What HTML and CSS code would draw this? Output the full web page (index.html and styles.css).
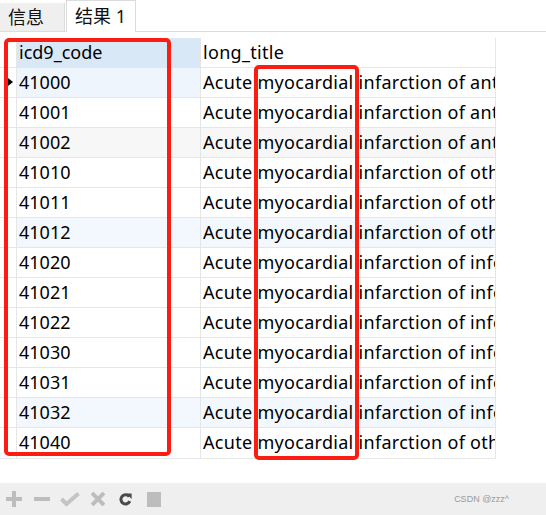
FILE: index.html
```html
<!DOCTYPE html>
<html lang="zh">

<head>
    <meta charset="UTF-8">
    <title>结果 1</title>
    <link rel="stylesheet" href="styles.css">
</head>

<body>
    <div class="tabs">
        <div class="tab">信息</div>
        <div class="tab active">结果 1</div>
    </div>

    <div class="grid-area">
        <div class="grid">
            <div class="row head">
                <div class="ind"></div>
                <div class="cell c1 sorted">icd9_code</div>
                <div class="cell c2">long_title</div>
            </div>
            <div class="row current">
                <div class="ind"><span class="arrow"></span></div>
                <div class="cell c1">41000</div>
                <div class="cell c2">Acute myocardial infarction of ant</div>
            </div>
            <div class="row">
                <div class="ind"></div>
                <div class="cell c1">41001</div>
                <div class="cell c2">Acute myocardial infarction of ant</div>
            </div>
            <div class="row grey">
                <div class="ind"></div>
                <div class="cell c1">41002</div>
                <div class="cell c2">Acute myocardial infarction of ant</div>
            </div>
            <div class="row">
                <div class="ind"></div>
                <div class="cell c1">41010</div>
                <div class="cell c2">Acute myocardial infarction of oth</div>
            </div>
            <div class="row">
                <div class="ind"></div>
                <div class="cell c1">41011</div>
                <div class="cell c2">Acute myocardial infarction of oth</div>
            </div>
            <div class="row blue">
                <div class="ind"></div>
                <div class="cell c1">41012</div>
                <div class="cell c2">Acute myocardial infarction of oth</div>
            </div>
            <div class="row">
                <div class="ind"></div>
                <div class="cell c1">41020</div>
                <div class="cell c2">Acute myocardial infarction of infe</div>
            </div>
            <div class="row">
                <div class="ind"></div>
                <div class="cell c1">41021</div>
                <div class="cell c2">Acute myocardial infarction of infe</div>
            </div>
            <div class="row">
                <div class="ind"></div>
                <div class="cell c1">41022</div>
                <div class="cell c2">Acute myocardial infarction of infe</div>
            </div>
            <div class="row">
                <div class="ind"></div>
                <div class="cell c1">41030</div>
                <div class="cell c2">Acute myocardial infarction of infe</div>
            </div>
            <div class="row">
                <div class="ind"></div>
                <div class="cell c1">41031</div>
                <div class="cell c2">Acute myocardial infarction of infe</div>
            </div>
            <div class="row blue">
                <div class="ind"></div>
                <div class="cell c1">41032</div>
                <div class="cell c2">Acute myocardial infarction of infe</div>
            </div>
            <div class="row">
                <div class="ind"></div>
                <div class="cell c1">41040</div>
                <div class="cell c2">Acute myocardial infarction of oth</div>
            </div>
        </div>

        <!-- annotation boxes drawn over the grid -->
        <div class="mark mark-code"></div>
        <div class="mark mark-word"></div>
    </div>

    <div class="toolbar">
        <svg class="tool t-add" width="16" height="16" viewBox="0 0 16 16"><path d="M8 0v16M0 8h16" stroke="#bdbdbd" stroke-width="4"/></svg>
        <svg class="tool t-del" width="16" height="16" viewBox="0 0 16 16"><path d="M0 8h16" stroke="#bdbdbd" stroke-width="4"/></svg>
        <svg class="tool t-ok" width="20" height="16" viewBox="0 0 20 16"><path d="M1.5 8l5 5L18.5 2.5" fill="none" stroke="#c4c4c4" stroke-width="4"/></svg>
        <svg class="tool t-no" width="14" height="14" viewBox="0 0 14 14"><path d="M1 1l12 12M13 1L1 13" stroke="#bdbdbd" stroke-width="4"/></svg>
        <svg class="tool t-ref" width="13" height="14" viewBox="0 0 13 14"><path d="M10.2 4.6A4.6 4.6 0 1 0 10.8 9.2" fill="none" stroke="#4a4a4a" stroke-width="3"/><path d="M7.2 1.6h5.4v5.4z" fill="#4a4a4a"/></svg>
        <svg class="tool t-stop" width="14" height="15" viewBox="0 0 14 15"><rect width="14" height="15" fill="#bdbdbd"/></svg>
        <span class="watermark">CSDN @zzz^</span>
    </div>
</body>

</html>
```

FILE: styles.css
```css
body {
    font-family: "Noto Sans", "Noto Sans CJK SC", sans-serif;
    margin: 0;
    padding: 0;
    width: 546px;
    height: 515px;
    display: flex;
    flex-direction: column;
    background-color: #fff;
    color: #000;
    overflow: hidden;
}

.tabs {
    display: flex;
    align-items: flex-end;
    height: 31px;
    border-bottom: 1px solid #dcdcdc;
}

.tab {
    width: 65px;
    height: 28px;
    line-height: 28px;
    padding-left: 8px;
    box-sizing: border-box;
    font-size: 18px;
    color: #111;
    background-color: #efefef;
    border-right: 1px solid #dcdcdc;
}

.tab.active {
    width: 70px;
    height: 32px;
    line-height: 31px;
    margin-left: 1px;
    margin-bottom: -1px;
    padding-left: 8px;
    background-color: #fff;
    border: 1px solid #dcdcdc;
    border-bottom: none;
}

.grid-area {
    flex: 1;
    position: relative;
    padding-top: 6px;
}

.grid {
    width: 496px;
    border-bottom: 1px solid #e6e6e6;
}

.row {
    display: flex;
    height: 30px;
}

.ind,
.cell {
    height: 30px;
    box-sizing: border-box;
    border-right: 1px solid #e6e6e6;
    border-bottom: 1px solid #e6e6e6;
}

.row:last-child .ind,
.row:last-child .cell {
    border-bottom: none;
}

.ind {
    width: 17px;
    position: relative;
    background-color: #fff;
}

.cell {
    font-size: 18px;
    line-height: 29px;
    padding-left: 2px;
    white-space: nowrap;
    overflow: hidden;
}

.c1 {
    width: 184px;
}

.c2 {
    width: 295px;
    letter-spacing: 0.3px;
}

.head .cell.sorted {
    background-color: #d9e8f7;
}

.current .c1 {
    background-color: #eef5fc;
}

.grey .cell {
    background-color: #f7f7f7;
}

.blue .cell {
    background-color: #f2f8fd;
}

.arrow {
    position: absolute;
    left: 8px;
    top: 10px;
    border-top: 4px solid transparent;
    border-bottom: 4px solid transparent;
    border-left: 5px solid #000;
}

.mark {
    position: absolute;
    border: 4px solid #fb1c12;
    border-radius: 5px;
}

.mark-code {
    left: 4px;
    top: 6px;
    width: 159px;
    height: 410px;
}

.mark-word {
    left: 254px;
    top: 33px;
    width: 97px;
    height: 387px;
}

.toolbar {
    height: 32px;
    background-color: #efefef;
    display: flex;
    align-items: center;
    padding-left: 6px;
}

.tool {
    display: block;
}

.t-del {
    margin-left: 12px;
}

.t-ok {
    margin-left: 10px;
}

.t-no {
    margin-left: 11px;
}

.t-ref {
    margin-left: 14px;
}

.t-stop {
    margin-left: 15px;
}

.watermark {
    margin-left: auto;
    margin-right: 37px;
    font-family: "Liberation Sans", sans-serif;
    font-size: 9px;
    color: #9a9a9a;
}
```
